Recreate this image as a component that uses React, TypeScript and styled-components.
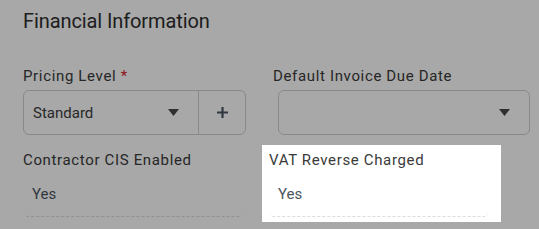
import styled, {createGlobalStyle} from 'styled-components';

const GlobalStyle = createGlobalStyle`
    html, body {
        margin: 0;
        padding: 0;
        background: #ffffff;
        font-family: Roboto, "Noto Sans", sans-serif;
    }
`;

const Caret = () => (
    <svg width="11" height="7" viewBox="0 0 11 7">
        <path d="M0 0 L11 0 L5.5 7 Z" fill="#4a4a4a"/>
    </svg>
);

const Plus = () => (
    <svg width="11" height="11" viewBox="0 0 11 11">
        <path d="M5.5 0 V11 M0 5.5 H11" stroke="#4a5663" strokeWidth="2.2"/>
    </svg>
);

const App = () => {
    return <Page>
        <GlobalStyle/>
        <Title>Financial Information</Title>

        <SelectRow>
            <Field>
                <Label>Pricing Level <Required>*</Required></Label>
                <Select width={223}>
                    <SelectValue>Standard</SelectValue>
                    <Caret/>
                    <AddButton><Plus/></AddButton>
                </Select>
            </Field>
            <Field>
                <Label>Default Invoice Due Date</Label>
                <Select width={252} offset={5}>
                    <SelectValue/>
                    <Caret/>
                </Select>
            </Field>
        </SelectRow>

        <ReadRow>
            <ReadField>
                <Label>Contractor CIS Enabled</Label>
                <ReadValue>Yes</ReadValue>
            </ReadField>
            <Spotlight>
                <Label>VAT Reverse Charged</Label>
                <ReadValue>Yes</ReadValue>
            </Spotlight>
        </ReadRow>
    </Page>;
};

export default App;



const Page = styled.div`
    width: 539px;
    height: 229px;
    box-sizing: border-box;
    padding: 9px 0 0 23px;
    overflow: hidden;
    position: relative;
    color: #3a3a3a;
`;

const Title = styled.div`
    font-size: 20px;
    font-weight: 400;
    letter-spacing: -0.1px;
    line-height: 24px;
    color: #2e2e2e;
`;

const SelectRow = styled.div`
    display: grid;
    grid-template-columns: 250px 260px;
    margin-top: 34px;
`;

const Field = styled.div`
    display: flex;
    flex-direction: column;
`;

const Label = styled.div`
    font-size: 15px;
    line-height: 18px;
    font-weight: 400;
    letter-spacing: 0.65px;
    color: #3a3a3a;
    white-space: nowrap;
`;

const Required = styled.span`
    color: #d9262c;
`;

const Select = styled.div<{width: number; offset?: number}>`
    width: ${p => p.width}px;
    margin-left: ${p => p.offset ?? 0}px;
    height: 45px;
    box-sizing: border-box;
    margin-top: 5px;
    border: 1px solid #d0d0d0;
    border-radius: 6px;
    display: flex;
    align-items: center;
    padding-left: 9px;
    padding-right: 19px;

    &:has(> button) {
        padding-right: 0;
    }

    & > svg {
        flex: none;
    }
`;

const SelectValue = styled.div`
    flex: 1;
    font-size: 15px;
    color: #3d3d3d;
`;

const AddButton = styled.button`
    width: 47px;
    height: 100%;
    margin-left: 19px;
    border: none;
    border-left: 1px solid #d0d0d0;
    background: transparent;
    display: flex;
    align-items: center;
    justify-content: center;
    padding: 0;
`;

const ReadRow = styled.div`
    display: grid;
    grid-template-columns: 239px 239px;
    margin-top: 10px;
    align-items: start;
`;

const ReadField = styled.div`
    display: flex;
    flex-direction: column;
    width: 219px;
    padding-top: 6px;
`;

const ReadValue = styled.div`
    margin-top: 16px;
    margin-left: 1px;
    width: 218px;
    box-sizing: border-box;
    padding: 0 8px 13px;
    font-size: 15px;
    line-height: 18px;
    color: #4c5560;
    border-bottom: 1px dashed #dcdcdc;
    border-radius: 0 0 4px 4px;
`;

const Spotlight = styled.div`
    position: relative;
    z-index: 1;
    display: flex;
    flex-direction: column;
    box-sizing: border-box;
    width: 239px;
    height: 77px;
    padding: 6px 7px 0;
    background: #ffffff;
    box-shadow: 0 0 0 2000px rgba(0, 0, 0, 0.34);
`;
